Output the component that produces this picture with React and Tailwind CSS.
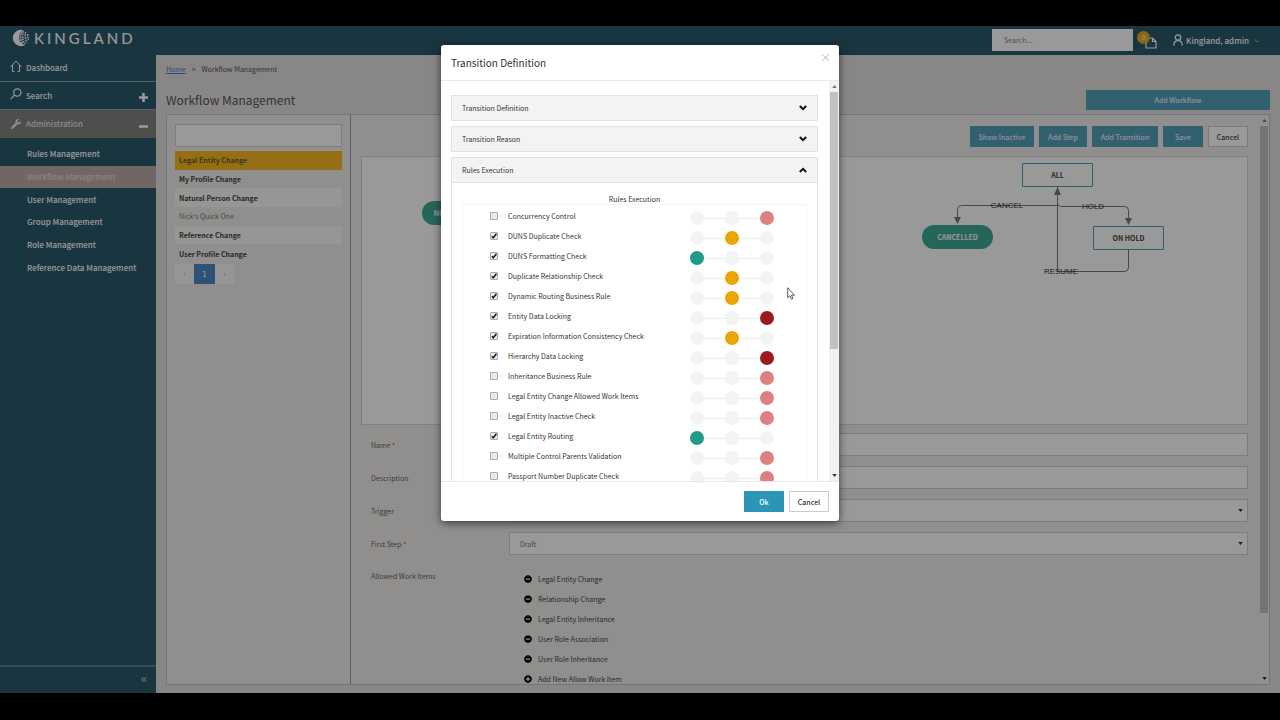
import { useState } from "react";
import { FaWrench, FaMinusCircle, FaPlusCircle } from "react-icons/fa";

const adminLinks = [
  "Rules Management",
  "Workflow Management",
  "User Management",
  "Group Management",
  "Role Management",
  "Reference Data Management",
];

const workflows = [
  "Legal Entity Change",
  "My Profile Change",
  "Natural Person Change",
  "Nick's Quick One",
  "Reference Change",
  "User Profile Change",
];

const workItems = [
  "Legal Entity Change",
  "Relationship Change",
  "Legal Entity Inheritance",
  "User Role Association",
  "User Role Inheritance",
];

// level: 0 = info, 1 = warning, 2 = error
const initialRules = [
  { name: "Concurrency Control", on: false, level: 2 },
  { name: "DUNS Duplicate Check", on: true, level: 1 },
  { name: "DUNS Formatting Check", on: true, level: 0 },
  { name: "Duplicate Relationship Check", on: true, level: 1 },
  { name: "Dynamic Routing Business Rule", on: true, level: 1 },
  { name: "Entity Data Locking", on: true, level: 2 },
  { name: "Expiration Information Consistency Check", on: true, level: 1 },
  { name: "Hierarchy Data Locking", on: true, level: 2 },
  { name: "Inheritance Business Rule", on: false, level: 2 },
  { name: "Legal Entity Change Allowed Work Items", on: false, level: 2 },
  { name: "Legal Entity Inactive Check", on: false, level: 2 },
  { name: "Legal Entity Routing", on: true, level: 0 },
  { name: "Multiple Control Parents Validation", on: false, level: 2 },
  { name: "Passport Number Duplicate Check", on: false, level: 2 },
];

const levelColors = ["bg-[#1f9c88]", "bg-[#e9a602]", "bg-[#9b1c1f]"];
const fadedColors = ["bg-[#8fcdc3]", "bg-[#f4d280]", "bg-[#de7f84]"];

const Globe = () => (
  <svg viewBox="0 0 18 18" className="h-[18px] w-[18px]" fill="none">
    <path d="M9 .8a8.200 8.200 0 1 0 0 16.400c2 0 3.300-.5 4.300-1.200C9 15 7.200 12 7.200 8.500S8.500 2.500 11.500 1.300A8 8 0 0 0 9 .8z" fill="#fff" />
    <g stroke="#fff" strokeWidth="1.500" strokeDasharray="1.700 .8">
      <path d="M9.500 2.800C8 6 8 12 11 15" />
      <path d="M11.500 2C10 6 10.500 12 13 15" />
      <path d="M13.500 3C13 6 13.500 11 15 13.500" />
      <path d="M15.700 5C15.700 7 16.200 10 16.400 11" />
    </g>
  </svg>
);

const HomeIcon = () => (
  <svg viewBox="0 0 12 12" className="mb-1 h-3 w-3" fill="none" stroke="currentColor" strokeWidth="1">
    <path d="M.5 7 6 1l5.500 6M2.500 5v6.500H4.500M9.500 5v6.500H7.500" />
  </svg>
);

const SearchIcon = () => (
  <svg viewBox="0 0 12 12" className="mb-1 h-3 w-3" fill="none" stroke="currentColor" strokeWidth="1.200">
    <circle cx="7.300" cy="4.500" r="3.700" />
    <path d="M4.600 7.200.7 11.200" />
  </svg>
);

const PlusMinus = ({ minus }) => (
  <svg viewBox="0 0 9 9" className="mt-1 ml-auto h-[9px] w-[9px]" fill="none" stroke="#fff" strokeWidth="2.600">
    <path d={minus ? "M0 4.500h9" : "M0 4.500h9M4.500 0v9"} />
  </svg>
);

const Chevron = ({ up }) => (
  <svg viewBox="0 0 8 6" className="h-[6px] w-2" fill="none" stroke="#111" strokeWidth="2">
    <path d={up ? "M.8 5 4 1.800 7.200 5" : "M.8 1 4 4.200 7.200 1"} />
  </svg>
);

const Arrow = ({ up, className }) => (
  <svg viewBox="0 0 6 4" className={`h-[3px] w-[5px] shrink-0 ${className}`} fill="currentColor">
    <path d={up ? "M0 4 3 0l3 4z" : "M0 0h6L3 4z"} />
  </svg>
);

const Scrollbar = ({ thumb, tone = "bg-[#c1c1c1]" }) => (
  <div className="flex w-[10px] shrink-0 flex-col items-center bg-[#f1f1f1] py-1">
    <Arrow up className="text-[#777]" />
    <div className="my-1 w-2 flex-1">
      <div className={`${thumb} ${tone}`} />
    </div>
    <Arrow className="text-[#333]" />
  </div>
);

const Sidebar = () => (
  <nav className="flex w-[156px] shrink-0 flex-col bg-[#2b5a6b] text-[8px] font-medium text-white">
    <a href="#dashboard" className="flex h-[27px] items-center gap-1 border-b border-[#88a5ae] px-[10px]">
      <HomeIcon />
      Dashboard
    </a>
    <button className="flex h-7 items-center gap-1 border-b border-[#88a5ae] pr-2 pl-[10px]">
      <SearchIcon />
      Search
      <PlusMinus />
    </button>
    <button className="flex h-[28px] items-center gap-1 bg-[#828281] pr-2 pl-[10px] text-[#e8e8e8]">
      <FaWrench className="mx-px h-[10px] w-[10px] -scale-x-100 rotate-90" />
      Administration
      <PlusMinus minus />
    </button>
    <ul className="mt-[5px] grid h-[136px] grid-rows-6">
      {adminLinks.map((link) => (
        <li key={link} className={link === "Workflow Management" ? "bg-[#bbaca7] text-[#e4dcd8]" : ""}>
          <a href="#admin" className="flex h-full items-center pl-[27px] whitespace-nowrap">
            {link}
          </a>
        </li>
      ))}
    </ul>
    <div className="mt-auto flex h-7 items-center justify-end border-t-2 border-[#5b8090] pr-[9px] pb-1 text-[#a9bcc4]">
      <button aria-label="Collapse menu" className="text-xs leading-none font-bold">«</button>
    </div>
  </nav>
);

const Header = () => (
  <header className="flex h-[29px] shrink-0 items-start bg-[#2b5a6b] text-white">
    <a href="#home" className="flex items-center gap-1 pt-[3px] pl-3">
      <Globe />
      <span className="font-['Lato',sans-serif] text-[15px] leading-[18px] font-medium tracking-[3px]">KINGLAND</span>
    </a>
    <div className="ml-auto flex items-center pt-[3px]">
      <input
        type="text"
        aria-label="Search"
        placeholder="Search..."
        className="h-[22px] w-[141px] bg-white px-3 text-[7px] placeholder:text-[#888]"
      />
      <button aria-label="Work queue" className="relative ml-2 h-[18px] w-5">
        <svg viewBox="0 0 12 12" className="absolute right-1 bottom-0 h-3 w-3" fill="none" stroke="currentColor" strokeWidth="1.200">
          <path d="M1 4v7h10V4.500L7.500 1H5M7.500 1v3.500H11" />
        </svg>
        <span className="absolute top-0 -left-1 flex h-[13px] w-[13px] items-center justify-center rounded-full bg-[#e9ab22] text-[7px] leading-none">
          0
        </span>
      </button>
      <button className="mt-[2px] mr-5 ml-3 flex items-center gap-[3px] text-[8px] font-medium">
        <svg viewBox="0 0 10 12" className="mb-[2px] h-3 w-[10px]" fill="none" stroke="currentColor" strokeWidth="1.300">
          <circle cx="5" cy="3.500" r="2.700" />
          <path d="M.8 11.500C.8 8 2.500 6.700 5 6.700s4.200 1.300 4.200 4.800" />
        </svg>
        Kingland, admin
        <svg viewBox="0 0 6 4" className="ml-[2px] h-1 w-[6px]" fill="none" stroke="#a9bcc4" strokeWidth=".8">
          <path d="M.5.5 3 3 5.500.5" />
        </svg>
      </button>
    </div>
  </header>
);

const WorkflowList = () => (
  <div className="w-[184px] shrink-0 border-r border-[#8fa3b9] px-2 pt-[9px]">
    <input aria-label="Filter workflows" type="text" className="h-[23px] w-full border border-[#ccd0d4] bg-white px-2 text-[7px]" />
    <ul className="mt-[4px] grid h-[112px] grid-rows-6 text-[7px] font-bold text-[#444]">
      {workflows.map((name, i) => (
        <li
          key={name}
          className={`flex items-center px-1 ${
            i === 0 ? "bg-[#f7b925] text-[#6d5a2a]" : i % 2 === 0 ? "bg-[#fbfaf8]" : ""
          } ${i === 3 ? "font-normal text-[#777]" : ""}`}
        >
          {name}
        </li>
      ))}
    </ul>
    <div className="mt-px flex text-[8px]">
      <button className="h-5 w-[19px] bg-[#fbfafa] text-[#aaa]">‹</button>
      <button className="h-5 w-[21px] bg-[#4a8ac4] text-white">1</button>
      <button className="h-5 w-[19px] bg-[#fbfafa] text-[#aaa]">›</button>
    </div>
  </div>
);

const Diagram = () => (
  <div className="relative mt-[9px] h-[269px] shrink-0 overflow-hidden border border-[#d4d4d2] bg-white text-[7px] font-bold text-[#444]">
    <svg viewBox="0 0 880 266" className="absolute top-0 left-0 h-[266px] w-[880px]" fill="none" stroke="#777" strokeWidth="1">
      <path d="M595.500 60V52.500q0-4 4-4H695.500V30" />
      <path d="M695.500 46q0 3.500 4 3.500H762.500q4 0 4 4V62" />
      <path d="M766.500 93V110.500q0 4-4 4H695.500V38" />
      <g fill="#777" stroke="none">
        <path d="M592 60h7l-3.500 7zM763 61h7l-3.500 7zM692 38h7l-3.500-8z" />
      </g>
      <g fill="#333" stroke="none" fontFamily="Liberation Sans, sans-serif" fontSize="8" fontWeight="400" textAnchor="middle">
        <text x="645" y="51">CANCEL</text>
        <text x="731" y="52">HOLD</text>
        <text x="699" y="117">RESUME</text>
      </g>
    </svg>
    <div className="absolute top-[44px] left-[60px] flex h-6 w-[71px] items-center justify-center rounded-full bg-[#40a896] text-white">NOT STARTED</div>
    <div className="absolute top-[6px] left-[660px] flex h-6 w-[71px] items-center justify-center rounded-[1px] border border-[#4f9cb8] bg-white">ALL</div>
    <div className="absolute top-[68px] left-[560px] flex h-6 w-[71px] items-center justify-center rounded-full bg-[#40a896] text-white">CANCELLED</div>
    <div className="absolute top-[69px] left-[731px] flex h-6 w-[71px] items-center justify-center rounded-[1px] border border-[#4f9cb8] bg-white">ON HOLD</div>
  </div>
);

const Field = ({ id, label, required, children }) => (
  <div className="flex h-[23px] items-center">
    <label htmlFor={id} className="w-[138px] shrink-0">
      {label} {required && <span className="text-[#d33]">*</span>}
    </label>
    <div className="relative h-full flex-1 border border-[#d0d0ce] bg-white">{children}</div>
  </div>
);

const SelectBox = ({ id, value }) => (
  <>
    <select id={id} defaultValue={value} className="h-full w-full appearance-none px-[10px] text-[#777]">
      <option>{value}</option>
    </select>
    <Arrow className="pointer-events-none absolute top-[9px] right-1 text-[#333]" />
  </>
);

const WorkflowEditor = () => (
  <div className="flex min-w-0 flex-1">
    <div className="flex min-w-0 flex-1 flex-col overflow-hidden pt-[11px] pr-[11px] pl-[10px]">
      <div className="flex justify-end gap-[5px] text-[7px] font-medium">
        <button className="h-[21px] w-16 bg-[#53a2b9] text-[#eef]">Show Inactive</button>
        <button className="h-[21px] w-12 bg-[#53a2b9] text-[#eef]">Add Step</button>
        <button className="h-[21px] w-[66px] bg-[#53a2b9] text-[#eef]">Add Transition</button>
        <button className="h-[21px] w-10 bg-[#53a2b9] text-[#eef]">Save</button>
        <button className="h-[21px] w-10 border border-[#ccc] bg-white text-[#444]">Cancel</button>
      </div>
      <Diagram />
      <form className="mt-2 flex flex-col gap-[10px] pl-[10px] text-[7px] text-[#666]">
        <Field id="name" label="Name" required>
          <input id="name" type="text" className="h-full w-full px-[10px]" />
        </Field>
        <Field id="description" label="Description">
          <input id="description" type="text" className="h-full w-full px-[10px]" />
        </Field>
        <Field id="trigger" label="Trigger">
          <SelectBox id="trigger" value="" />
        </Field>
        <Field id="firstStep" label="First Step" required>
          <SelectBox id="firstStep" value="Draft" />
        </Field>
        <div className="flex leading-2">
          <span className="w-[153px] shrink-0 pt-[7px]">Allowed Work Items</span>
          <ul className="pt-1 text-[#444]">
            {workItems.map((item) => (
              <li key={item} className="flex h-5 items-center gap-[6px]">
                <FaMinusCircle className="h-2 w-2 text-black" />
                {item}
              </li>
            ))}
            <li className="flex h-5 items-center gap-[6px]">
              <FaPlusCircle className="h-2 w-2 text-black" />
              Add New Allow Work Item
            </li>
          </ul>
        </div>
      </form>
    </div>
    <Scrollbar thumb="h-[89%]" />
  </div>
);

const Accordion = ({ title, open, onToggle, children }) => (
  <section className="border border-[#e2e2e2]">
    <button onClick={onToggle} aria-expanded={open} className="flex h-[24px] w-full items-center justify-between bg-[#f3f3f3] px-[10px]">
      {title}
      <Chevron up={open} />
    </button>
    {open && <div className="min-h-5 border-t border-[#e2e2e2] px-[10px] pt-[11px] pb-3">{children}</div>}
  </section>
);

const RuleRow = ({ rule, onToggle }) => (
  <li className="flex h-5 items-center pr-8 pl-[27px]">
    <label className="flex items-center gap-[10px]">
      <span className="relative h-2 w-2">
        <input
          type="checkbox"
          checked={rule.on}
          onChange={onToggle}
          className="block h-2 w-2 appearance-none rounded-[1px] border border-[#aaa] bg-[#e9e9e9]"
        />
        {rule.on && (
          <svg viewBox="0 0 8 8" className="pointer-events-none absolute inset-0 h-2 w-2" fill="none" stroke="#222" strokeWidth="1.600">
            <path d="M1.800 4.200 3.300 5.800 6.400 1.800" />
          </svg>
        )}
      </span>
      {rule.name}
    </label>
    <div className="mt-1 ml-auto flex items-center">
      {[0, 1, 2].map((level) => (
        <div key={level} className="flex items-center">
          {level > 0 && <div className="h-px w-[21px] bg-[#eeeeee]" />}
          <div
            className={`h-[14px] w-[14px] rounded-full ${
              rule.level !== level ? "bg-[#f3f3f3]" : rule.on ? levelColors[level] : fadedColors[level]
            }`}
          />
        </div>
      ))}
    </div>
  </li>
);

const TransitionDialog = ({ onClose }) => {
  const [rules, setRules] = useState(initialRules);
  const [openSection, setOpenSection] = useState("Rules Execution");

  const toggleRule = (name) => {
    setRules(rules.map((r) => (r.name === name ? { ...r, on: !r.on } : r)));
  };

  const toggleSection = (title) => {
    setOpenSection(openSection === title ? null : title);
  };

  return (
    <div className="absolute inset-0 flex items-start justify-center bg-black/40 pt-[19px]">
      <div role="dialog" aria-label="Transition Definition" className="flex w-[398px] flex-col rounded-[3px] bg-white text-[7px] text-[#333] shadow-[0_2px_8px_rgba(0,0,0,0.6)]">
        <div className="flex h-9 items-center justify-between border-b border-[#e8e8e8] pr-2 pl-[10px]">
          <h2 className="text-[10px]">Transition Definition</h2>
          <button onClick={onClose} aria-label="Close" className="mb-[10px] text-[11px] leading-none text-[#bbb]">×</button>
        </div>
        <div className="flex h-[400px]">
          <div className="flex flex-1 flex-col gap-[5px] overflow-y-auto pt-[14px] pr-[11px] pl-[10px] [scrollbar-width:none]">
            <Accordion title="Transition Definition" open={openSection === "Transition Definition"} onToggle={() => toggleSection("Transition Definition")} />
            <Accordion title="Transition Reason" open={openSection === "Transition Reason"} onToggle={() => toggleSection("Transition Reason")} />
            <Accordion title="Rules Execution" open={openSection === "Rules Execution"} onToggle={() => toggleSection("Rules Execution")}>
              <h3 className="text-center leading-[10px]">Rules Execution</h3>
              <ul className="border border-[#f5f5f5] pt-px">
                {rules.map((rule) => (
                  <RuleRow key={rule.name} rule={rule} onToggle={() => toggleRule(rule.name)} />
                ))}
              </ul>
            </Accordion>
          </div>
          <Scrollbar thumb="h-[68%]" />
        </div>
        <div className="flex h-10 items-center justify-end gap-[5px] border-t border-[#e8e8e8] px-[10px] font-medium">
          <button onClick={onClose} className="h-[21px] w-10 bg-[#2c95b6] text-white">Ok</button>
          <button onClick={onClose} className="h-[21px] w-10 border border-[#ccc] bg-white">Cancel</button>
        </div>
      </div>
    </div>
  );
};

const App = () => {
  const [dialogOpen, setDialogOpen] = useState(true);

  return (
    <div className="h-screen bg-black pt-[26px] pb-[27px] font-['Noto_Sans_CJK_SC','Open_Sans',sans-serif] leading-3">
      <div className="relative flex h-full flex-col overflow-hidden">
        <Header />
        <div className="flex min-h-0 flex-1">
          <Sidebar />
          <main className="flex min-w-0 flex-1 flex-col bg-[#e4e1df] px-[10px] pt-2 pb-2 text-[#555]">
            <div className="flex gap-[6px] text-[7px]">
              <a href="#home" className="text-[#4a80c0] underline">Home</a>
              <span>&gt;</span>
              <span>Workflow Management</span>
            </div>
            <div className="mt-[15px] mb-1 flex items-center justify-between">
              <h1 className="text-[12px]">Workflow Management</h1>
              <button className="h-5 w-[184px] bg-[#53a2b9] text-[7px] font-medium text-[#eef]">Add Workflow</button>
            </div>
            <div className="flex min-h-0 flex-1 border border-[#b9c8d0] bg-[#f2efec]">
              <WorkflowList />
              <WorkflowEditor />
            </div>
          </main>
        </div>
        {dialogOpen && <TransitionDialog onClose={() => setDialogOpen(false)} />}

        <svg viewBox="0 0 8 13" className="pointer-events-none absolute top-[261px] left-[787px] h-[13px] w-2" fill="#fff" stroke="#333" strokeWidth=".8">
          <path d="M.7.7v10l2.300-2 1.500 3.500 1.500-.7-1.500-3.300h3z" />
        </svg>
      </div>
    </div>
  );
};

export default App;
